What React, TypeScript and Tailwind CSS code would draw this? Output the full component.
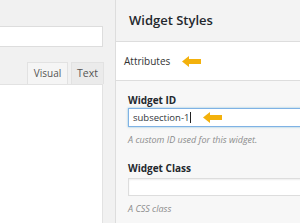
import React from "react";

function Arrow({ className }: { className?: string }) {
  return (
    <svg className={className} width="19" height="11" viewBox="0 0 19 11">
      <path d="M0 5.5 L7 0 L7 3 L19 3 L19 8 L7 8 L7 11 Z" fill="#f3b10c" />
    </svg>
  );
}

export default function App() {
  return (
    <div
      className="w-[300px] h-[223px] flex overflow-hidden bg-[#f1f1f1] text-[#32373c]"
      style={{ fontFamily: '"Open Sans", "Liberation Sans", sans-serif' }}
    >
      {/* Left editor area */}
      <div className="w-[115px] shrink-0 flex flex-col">
        <div className="mt-[26px] w-[104px] -ml-[1px] h-[21px] bg-white border border-[#dddddd]" />
        <div className="mt-[15px] w-[104px] flex justify-end gap-[3px] h-[22px]">
          <div className="w-[41px] h-[22px] bg-[#f5f5f5] border border-[#e2e2e2] border-b-0 flex items-center justify-center text-[10px] text-[#555]">
            Visual
          </div>
          <div className="w-[33px] h-[22px] bg-[#ebebeb] border border-[#e2e2e2] border-b-0 flex items-center justify-center text-[10.5px] text-[#555]">
            Text
          </div>
        </div>
        <div className="w-[104px] -ml-[1px] flex-1 bg-white border border-[#e2e2e2] border-b-0" />
      </div>

      {/* Right panel */}
      <div className="flex-1 flex flex-col border-l border-[#dddddd] bg-[#f7f7f7] min-w-0">
        <div className="h-[42px] shrink-0 bg-[#f3f3f3] border-b border-[#dddddd] flex items-center pl-[13px]">
          <span className="text-[13px] font-semibold text-[#23282d] leading-none">Widget Styles</span>
        </div>
        <div className="h-[39px] shrink-0 bg-white border-b border-[#dddddd] flex items-center pl-[8px]">
          <span className="text-[10px] text-[#333]">Attributes</span>
          <Arrow className="ml-[12px]" />
        </div>
        <div className="pl-[12px] pt-[13px] flex flex-col">
          <div className="text-[10px] font-bold text-[#23282d] leading-[12px]">Widget ID</div>
          <div className="mt-[2px] h-[19px] -mr-[10px] bg-white border border-[#7fb2e5] shadow-[0_0_2px_rgba(30,140,190,0.5)] flex items-center pl-[4px]">
            <span className="text-[9.5px] text-[#32373c] leading-none">subsection-1</span>
            <span className="w-px h-[11px] bg-[#222] ml-[1px]" />
            <Arrow className="ml-[12px]" />
          </div>
          <div className="mt-[7px] text-[9px] italic text-[#8c8c8c] leading-[12px]">
            A custom ID used for this widget.
          </div>
          <div className="mt-[16px] text-[10px] font-bold text-[#23282d] leading-[12px]">Widget Class</div>
          <div className="mt-[4px] h-[18px] -mr-[10px] bg-white border border-[#dddddd] shadow-[inset_0_1px_2px_rgba(0,0,0,0.07)]" />
          <div className="mt-[7px] text-[9px] italic text-[#8c8c8c] leading-[12px]">A CSS class</div>
        </div>
      </div>
    </div>
  );
}
